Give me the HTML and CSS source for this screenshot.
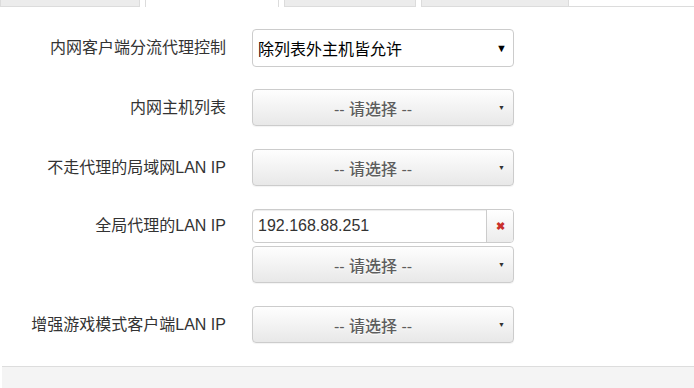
FILE: index.html
```html
<!DOCTYPE html>
<html lang="zh-CN">
<head>
  <meta charset="UTF-8">
  <title>访问控制</title>
  <link rel="stylesheet" href="styles.css">
</head>
<body>
  <div class="page">
    <ul class="nav-tabs">
      <li class="tab" style="width: 140px;"></li>
      <li class="tab active" style="width: 134px;"></li>
      <li class="tab" style="width: 132px;"></li>
      <li class="tab" style="width: 148px;"></li>
      <li class="tab-rest"></li>
    </ul>

    <div class="panel">
      <div class="form-row">
        <label class="form-label">内网客户端分流代理控制</label>
        <div class="form-control">
          <div class="select plain">
            <span class="select-text">除列表外主机皆允许</span>
            <span class="caret big">&#9660;</span>
          </div>
        </div>
      </div>

      <div class="form-row">
        <label class="form-label">内网主机列表</label>
        <div class="form-control">
          <div class="select picker">
            <span class="select-text">-- 请选择 --</span>
            <span class="caret">&#9660;</span>
          </div>
        </div>
      </div>

      <div class="form-row">
        <label class="form-label">不走代理的局域网LAN IP</label>
        <div class="form-control">
          <div class="select picker">
            <span class="select-text">-- 请选择 --</span>
            <span class="caret">&#9660;</span>
          </div>
        </div>
      </div>

      <div class="form-row multi">
        <label class="form-label short">全局代理的LAN IP</label>
        <div class="form-control">
          <div class="input-group">
            <span class="input-value">192.168.88.251</span>
            <span class="input-btn">&#10006;</span>
          </div>
          <div class="select picker">
            <span class="select-text">-- 请选择 --</span>
            <span class="caret">&#9660;</span>
          </div>
        </div>
      </div>

      <div class="form-row">
        <label class="form-label">增强游戏模式客户端LAN IP</label>
        <div class="form-control">
          <div class="select picker">
            <span class="select-text">-- 请选择 --</span>
            <span class="caret">&#9660;</span>
          </div>
        </div>
      </div>
    </div>

    <div class="panel-footer"></div>
  </div>
</body>
</html>
```

FILE: styles.css
```css
/* 基本樣式 */
body {
  margin: 0;
  font-family: "Liberation Sans", "Noto Sans CJK SC", Arial, sans-serif;
  font-size: 16px;
  color: #333;
  background-color: #fff;
}

.page {
  width: 694px;
  height: 388px;
  overflow: hidden;
  display: flex;
  flex-direction: column;
}

/* 上方分頁 */
.nav-tabs {
  list-style: none;
  margin: 0;
  padding: 0;
  display: flex;
  gap: 5px;
  height: 7px;
}

.tab {
  background-color: #ececec;
  border: 1px solid #dcdcdc;
  border-top: none;
  box-sizing: border-box;
  height: 7px;
}

.tab.active {
  background-color: #fff;
  border-bottom: none;
}

.tab-rest {
  flex: 1;
  margin-left: -5px;
  height: 6px;
  border-bottom: 1px solid #dcdcdc;
}

/* 表單 */
.panel {
  padding-top: 22px;
  height: 337px;
  box-sizing: border-box;
}

.form-row {
  display: flex;
  align-items: flex-start;
  margin-bottom: 22px;
}

.form-row.multi {
  margin-bottom: 23px;
}

.form-label {
  width: 226px;
  height: 38px;
  line-height: 38px;
  text-align: right;
  margin-right: 26px;
  color: #333;
}

.form-label.short {
  height: 34px;
  line-height: 34px;
}

.form-control {
  width: 262px;
  display: flex;
  flex-direction: column;
  gap: 3px;
}

.select {
  height: 38px;
  box-sizing: border-box;
  border: 1px solid #ccc;
  border-radius: 4px;
  display: flex;
  align-items: center;
  position: relative;
}

.select.plain {
  background-color: #fff;
  padding-left: 5px;
  color: #000;
}

.select.picker {
  height: 37px;
  justify-content: center;
  padding-right: 20px;
  background: linear-gradient(to bottom, #fefefe 0%, #e8e8e8 100%);
  color: #5e5e5e;
  font-weight: 500;
  box-shadow: 0 1px 1px rgba(0, 0, 0, 0.05);
}

.select.picker .select-text {
  text-shadow: 0 1px 0 #fff;
}

.caret {
  position: absolute;
  right: 8px;
  top: 14px;
  font-size: 7px;
  color: #333;
  font-weight: normal;
}

.caret.big {
  right: 6px;
  top: 12px;
  font-size: 11px;
  color: #000;
}

/* 已選 IP 欄位 */
.input-group {
  height: 34px;
  box-sizing: border-box;
  border: 1px solid #ccc;
  border-radius: 4px;
  display: flex;
  align-items: stretch;
  background-color: #fff;
  box-shadow: inset 0 1px 1px rgba(0, 0, 0, 0.075);
}

.input-value {
  flex: 1;
  padding-left: 5px;
  line-height: 32px;
  color: #333;
}

.input-btn {
  width: 26px;
  border-left: 1px solid #ccc;
  background: linear-gradient(to bottom, #fff 0%, #ececec 100%);
  border-radius: 0 3px 3px 0;
  color: #c9302c;
  font-size: 11px;
  font-weight: bold;
  display: flex;
  align-items: center;
  justify-content: center;
}

.panel-footer {
  flex: 1;
  margin-left: 2px;
  margin-top: 22px;
  background-color: #f4f4f4;
  border-top: 1px solid #ddd;
}
```
